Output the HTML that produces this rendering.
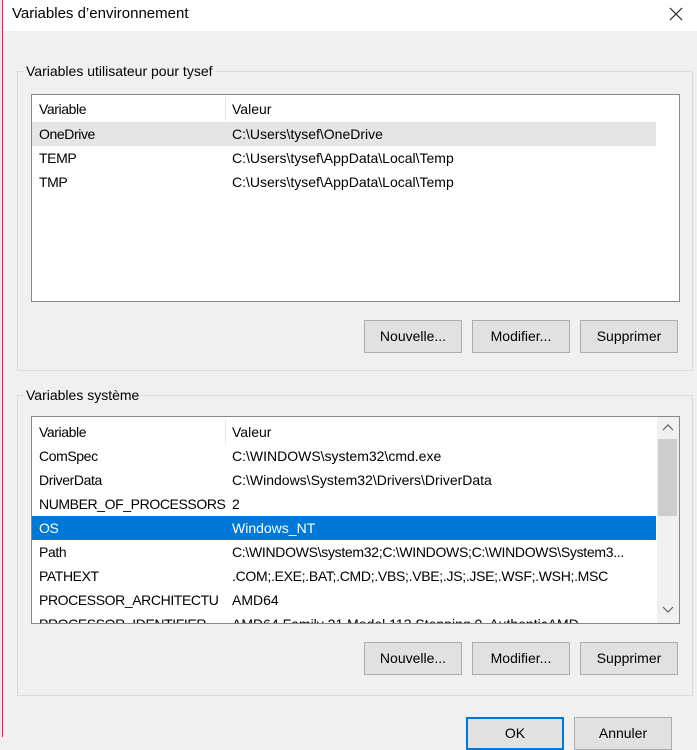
<!DOCTYPE html>
<html><head><meta charset="utf-8"><style>
*{margin:0;padding:0;box-sizing:border-box}
body{width:697px;height:737px;overflow:hidden;background:#f0f0f0;font-family:"Liberation Sans",sans-serif;font-size:14px;color:#000;position:relative}
.a{position:absolute;white-space:nowrap}
.title{left:3px;top:0;width:694px;height:31px;background:#fff}
.grp{border:1px solid #dcdcdc}
.lbl{background:#f0f0f0;padding:0 2px}
.list{background:#fff;border:1px solid #828790;overflow:hidden}
.row{position:absolute;left:0;height:24px;line-height:24px}
.row span{position:absolute}
.row span:first-child{letter-spacing:-0.4px}
.btn{background:#e1e1e1;border:1px solid #adadad;text-align:center;line-height:30px}
</style></head><body>
<div class="a" style="left:0;top:0;width:2px;height:737px;background:#e8e8e8"></div>
<div class="a" style="left:2px;top:0;width:1px;height:737px;background:#c8346c"></div>
<div class="a title"></div>
<div class="a" style="left:12px;top:5px;font-size:15px">Variables d’environnement</div>
<svg class="a" style="left:668px;top:6px" width="16" height="16"><path d="M2 2L14 14M14 2L2 14" stroke="#222" stroke-width="1.2"/></svg>

<div class="a grp" style="left:17px;top:71px;width:676px;height:300px"></div>
<div class="a lbl" style="left:24px;top:63px">Variables utilisateur pour tysef</div>
<div class="a list" style="left:31px;top:94px;width:649px;height:208px">
 <div class="row" style="top:2px;width:624px"><span style="left:7px">Variable</span><span style="left:200px">Valeur</span><div class="a" style="left:193px;top:0;width:1px;height:24px;background:#e5e5e5"></div></div>
 <div class="row" style="top:27px;width:624px;background:#e5e5e5"><span style="left:7px">OneDrive</span><span style="left:200px">C:\Users\tysef\OneDrive</span></div>
 <div class="row" style="top:51px;width:624px"><span style="left:7px">TEMP</span><span style="left:200px">C:\Users\tysef\AppData\Local\Temp</span></div>
 <div class="row" style="top:75px;width:624px"><span style="left:7px">TMP</span><span style="left:200px">C:\Users\tysef\AppData\Local\Temp</span></div>
</div>
<div class="a btn" style="left:364px;top:320px;width:98px;height:33px">Nouvelle...</div>
<div class="a btn" style="left:472px;top:320px;width:98px;height:33px">Modifier...</div>
<div class="a btn" style="left:580px;top:320px;width:98px;height:33px">Supprimer</div>

<div class="a grp" style="left:17px;top:395px;width:676px;height:301px"></div>
<div class="a lbl" style="left:24px;top:387px">Variables système</div>
<div class="a list" style="left:31px;top:416px;width:649px;height:208px">
 <div class="row" style="top:3px;width:624px"><span style="left:7px">Variable</span><span style="left:200px">Valeur</span><div class="a" style="left:193px;top:0;width:1px;height:24px;background:#e5e5e5"></div></div>
 <div class="row" style="top:27px;width:624px"><span style="left:7px">ComSpec</span><span style="left:200px">C:\WINDOWS\system32\cmd.exe</span></div>
 <div class="row" style="top:51px;width:624px"><span style="left:7px">DriverData</span><span style="left:200px">C:\Windows\System32\Drivers\DriverData</span></div>
 <div class="row" style="top:75px;width:624px"><span style="left:7px">NUMBER_OF_PROCESSORS</span><span style="left:200px">2</span></div>
 <div class="row" style="top:99px;width:624px;background:#0078d7;color:#fff"><span style="left:7px">OS</span><span style="left:200px">Windows_NT</span></div>
 <div class="row" style="top:123px;width:624px"><span style="left:7px">Path</span><span style="left:200px;letter-spacing:-0.3px">C:\WINDOWS\system32;C:\WINDOWS;C:\WINDOWS\System3...</span></div>
 <div class="row" style="top:147px;width:624px"><span style="left:7px">PATHEXT</span><span style="left:200px;letter-spacing:-0.3px">.COM;.EXE;.BAT;.CMD;.VBS;.VBE;.JS;.JSE;.WSF;.WSH;.MSC</span></div>
 <div class="row" style="top:171px;width:624px"><span style="left:7px">PROCESSOR_ARCHITECTU</span><span style="left:200px">AMD64</span></div>
 <div class="row" style="top:195px;width:624px"><span style="left:7px">PROCESSOR_IDENTIFIER</span><span style="left:200px">AMD64 Family 21 Model 112 Stepping 0, AuthenticAMD</span></div>
 <div class="a" style="left:625px;top:0;width:22px;height:206px;background:#f0f0f0"></div>
 <div class="a" style="left:626px;top:22px;width:19px;height:77px;background:#cdcdcd"></div>
 <svg class="a" style="left:629px;top:6px" width="14" height="10"><path d="M2 7L7 2L12 7" stroke="#606060" fill="none" stroke-width="1.2"/></svg>
 <svg class="a" style="left:629px;top:188px" width="14" height="10"><path d="M2 2L7 7L12 2" stroke="#606060" fill="none" stroke-width="1.2"/></svg>
</div>
<div class="a btn" style="left:364px;top:642px;width:98px;height:33px">Nouvelle...</div>
<div class="a btn" style="left:472px;top:642px;width:98px;height:33px">Modifier...</div>
<div class="a btn" style="left:580px;top:642px;width:98px;height:33px">Supprimer</div>

<div class="a btn" style="left:466px;top:717px;width:98px;height:33px;border:2px solid #0078d7;line-height:29px">OK</div>
<div class="a btn" style="left:574px;top:717px;width:98px;height:33px;line-height:31px">Annuler</div>
</body></html>
